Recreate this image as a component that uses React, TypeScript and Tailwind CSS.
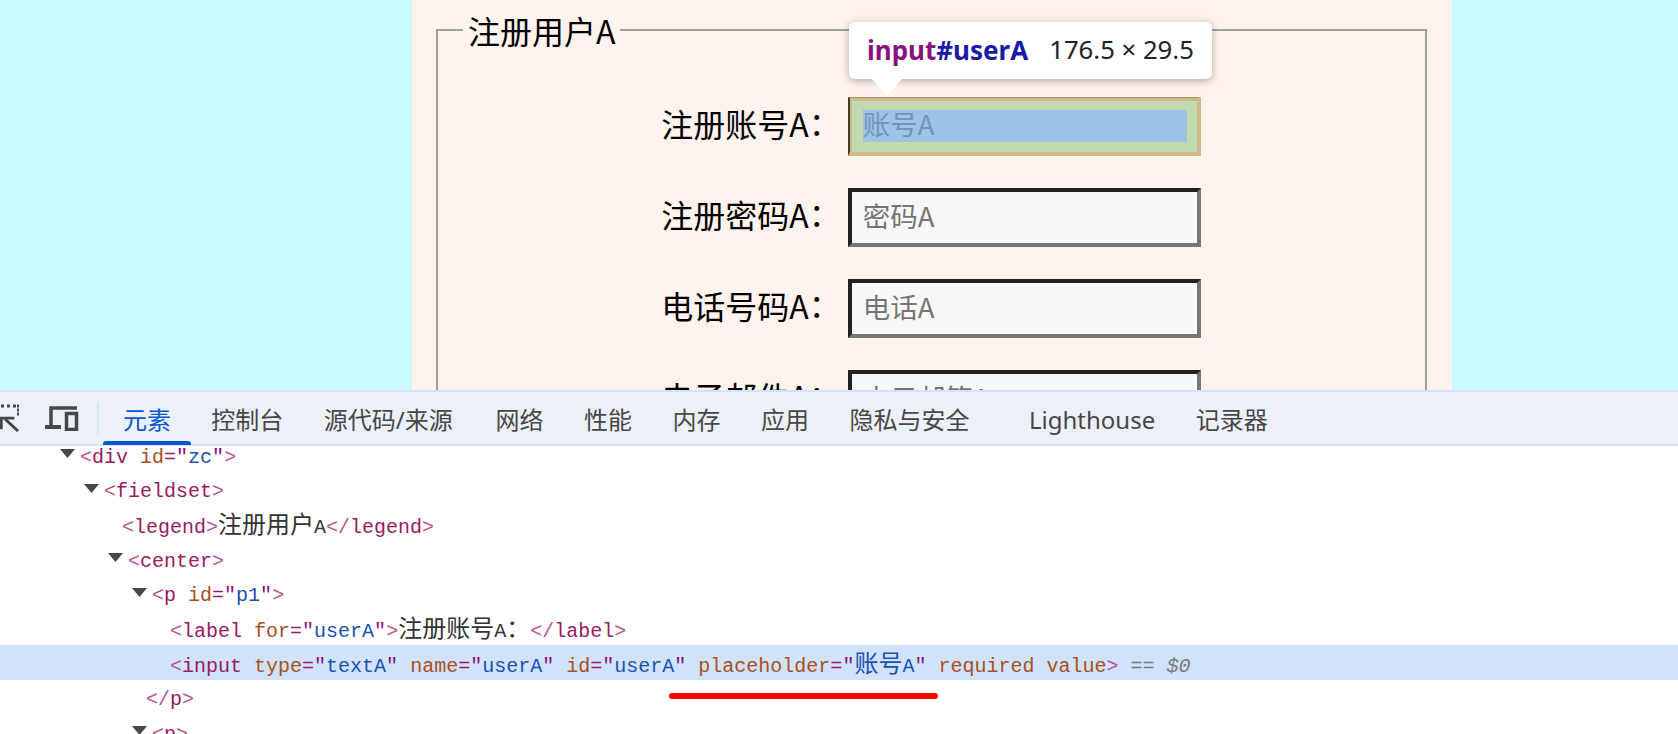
import type { ReactNode } from "react";

const cjk = '"Noto Sans CJK SC", sans-serif';

type FieldProps = {
  label: string;
  placeholder: string;
};

function FieldLabel({ label }: { label: string }) {
  return (
    <label className="text-[32px] leading-[44px] text-black mb-[8px] ml-[-2px] mr-[2px]">
      {label}
      <span className="font-['Noto_Sans_CJK_TC'] ml-[-8px] mr-[8px]">：</span>
    </label>
  );
}

function Field({ label, placeholder }: FieldProps) {
  return (
    <p className="flex items-center justify-center gap-[5px]">
      <FieldLabel label={label} />
      <input
        type="text"
        placeholder={placeholder}
        className="w-[353px] h-[59px] border-[4px] border-solid border-t-[#222222] border-l-[#222222] border-r-[#767676] border-b-[#767676] bg-[#f8f8f8] pl-[11px] pr-[10px] pb-[6px] text-[27.5px] leading-[32px] placeholder:text-[#757575]"
      />
    </p>
  );
}

function Arrow() {
  return (
    <svg width="15" height="9" viewBox="0 0 15 9" className="mr-[5px] mt-[-8px] shrink-0">
      <polygon points="0,0 15,0 7.5,9" fill="#474747" />
    </svg>
  );
}

const B = ({ children }: { children: ReactNode }) => (
  <span className="text-[#b9568c]">{children}</span>
);
const Tag = ({ children }: { children: ReactNode }) => (
  <span className="text-[#9c1a5f]">{children}</span>
);
const Attr = ({ children }: { children: ReactNode }) => (
  <span className="text-[#a94f1f]">{children}</span>
);
const Val = ({ children }: { children: ReactNode }) => (
  <span className="text-[#1a51b3]">
    <span className="text-[#881280]">"</span>
    {children}
    <span className="text-[#881280]">"</span>
  </span>
);
const Cn = ({ children }: { children: ReactNode }) => (
  <span className="text-[24px] leading-none font-['Noto_Sans_CJK_SC']">{children}</span>
);

const rowClass =
  "flex items-center h-[34.67px] pt-[6px] whitespace-pre font-['Liberation_Mono'] text-[20px]";

function DomTree() {
  return (
    <div className="relative flex-1 bg-white overflow-hidden">
      <div className="mt-[-8.6px]">
        <div className={`${rowClass} pl-[60px]`}>
          <Arrow />
          <span>
            <B>&lt;</B><Tag>div</Tag> <Attr>id</Attr><Tag>=</Tag><Val>zc</Val><B>&gt;</B>
          </span>
        </div>
        <div className={`${rowClass} pl-[84px]`}>
          <Arrow />
          <span>
            <B>&lt;</B><Tag>fieldset</Tag><B>&gt;</B>
          </span>
        </div>
        <div className={`${rowClass} pl-[122px]`}>
          <span>
            <B>&lt;</B><Tag>legend</Tag><B>&gt;</B>
            <span className="text-[#333333]"><Cn>注册用户</Cn>A</span>
            <B>&lt;/</B><Tag>legend</Tag><B>&gt;</B>
          </span>
        </div>
        <div className={`${rowClass} pl-[108px]`}>
          <Arrow />
          <span>
            <B>&lt;</B><Tag>center</Tag><B>&gt;</B>
          </span>
        </div>
        <div className={`${rowClass} pl-[132px]`}>
          <Arrow />
          <span>
            <B>&lt;</B><Tag>p</Tag> <Attr>id</Attr><Tag>=</Tag><Val>p1</Val><B>&gt;</B>
          </span>
        </div>
        <div className={`${rowClass} pl-[170px]`}>
          <span>
            <B>&lt;</B><Tag>label</Tag> <Attr>for</Attr><Tag>=</Tag><Val>userA</Val><B>&gt;</B>
            <span className="text-[#333333]"><Cn>注册账号</Cn>A<Cn>：</Cn></span>
            <B>&lt;/</B><Tag>label</Tag><B>&gt;</B>
          </span>
        </div>
        <div className={`${rowClass} pl-[170px] bg-[#d1e2fb]`}>
          <span>
            <B>&lt;</B><Tag>input</Tag> <Attr>type</Attr><Tag>=</Tag><Val>textA</Val>{" "}
            <Attr>name</Attr><Tag>=</Tag><Val>userA</Val>{" "}
            <Attr>id</Attr><Tag>=</Tag><Val>userA</Val>{" "}
            <Attr>placeholder</Attr><Tag>=</Tag><Val><Cn>账号</Cn>A</Val>{" "}
            <Attr>required</Attr> <Attr>value</Attr><B>&gt;</B>
            <span className="italic text-[#7a7a7a]"> == $0</span>
          </span>
        </div>
        <div className={`${rowClass} pl-[146px]`}>
          <span>
            <B>&lt;/</B><Tag>p</Tag><B>&gt;</B>
          </span>
        </div>
        <div className={`${rowClass} pl-[132px]`}>
          <Arrow />
          <span>
            <B>&lt;</B><Tag>p</Tag><B>&gt;</B>
          </span>
        </div>
      </div>
      {/* hand drawn red mark under the placeholder attr */}
      <div className="absolute left-[669px] top-[247px] w-[269px] h-[6px] rounded-full bg-[#ff0000]" />
    </div>
  );
}

const tabs = ["控制台", "网络", "性能", "内存", "应用", "隐私与安全"];

function Toolbar() {
  return (
    <div className="flex items-center h-[56px] shrink-0 bg-[#ecf0f9] border-y-2 border-[#d3e3fd] text-[24px] text-[#474747] font-['Noto_Sans','Noto_Sans_CJK_SC',sans-serif]">
      <svg width="20" height="28" viewBox="0 0 20 28" className="shrink-0">
        <path d="M1 2h3M7 2h3M13 2h3M17 2h2M17 6h2M17 10h2" stroke="#474747" strokeWidth="3" fill="none" />
        <path d="M0 13h16v3H3v11H0z" fill="#474747" transform="translate(0 1) scale(0.9)" />
        <path d="M5 15l13 12" stroke="#474747" strokeWidth="3" fill="none" />
      </svg>
      <svg width="34" height="26" viewBox="0 0 34 26" className="ml-[25px] shrink-0">
        <path d="M6 23V3h26" stroke="#474747" strokeWidth="3.5" fill="none" />
        <rect x="0" y="20" width="16" height="4" fill="#474747" />
        <rect x="21.5" y="8.5" width="10" height="16" stroke="#474747" strokeWidth="3.5" fill="none" />
      </svg>
      <div className="w-[2px] h-[32px] bg-[#d3e3fd] ml-[18px] mr-[4px]" />
      <div className="relative h-full flex items-center px-[20px] pt-[4px] text-[#0b57d0]">
        元素
        <div className="absolute left-0 right-0 bottom-[-1px] h-[4px] rounded-t-[3px] bg-[#0b57d0]" />
      </div>
      {tabs.map((tab, index) => (
        <div key={tab} className="flex items-center h-full pt-[4px]">
          {index === 1 && <div className="px-[20.25px] pr-[22.5px]">源代码/来源</div>}
          <div className="px-[20.25px]">{tab}</div>
        </div>
      ))}
      <div className="flex items-center h-full px-[20.25px] pt-[4px] ml-[19px]">Lighthouse</div>
      <div className="flex items-center h-full px-[20.25px] pt-[4px]">记录器</div>
    </div>
  );
}

export default function App() {
  return (
    <div className="relative w-[1678px] h-[734px] flex flex-col overflow-hidden bg-white" style={{ fontFamily: cjk }}>
      <div className="h-[390px] shrink-0 bg-[#ccfbff] overflow-hidden">
        <div className="ml-[412px] w-[1040px] h-full bg-[#fff3ee] pt-[8px] pl-[24px] pr-[25px]">
          <fieldset className="border-2 border-solid border-[#a0a0a0] pl-[25px] h-[500px]">
            <legend className="px-[5px] text-[32px] leading-[44px] text-black">注册用户A</legend>
            <div className="flex flex-col gap-[32px] pt-[45px] ml-[-25px] pl-[1px]">
              <p className="flex items-center justify-center gap-[5px]">
                <FieldLabel label="注册账号A" />
                <span className="w-[353px] h-[59px] border-solid border-t-[1px] border-r-[4px] border-b-[4px] border-l-[2px] border-t-[#a3956c] border-r-[#cfba89] border-b-[#cfba89] border-l-[#3f3a2a] shadow-[inset_2px_3px_0_#cfba89] bg-[#c3d9b0] pl-[13px] pr-[10px] pt-[12px] pb-[10px]">
                  <input
                    type="text"
                    placeholder="账号A"
                    className="block w-full h-full bg-[#9dc3e6] pb-[6px] text-[27.5px] leading-[26px] placeholder:text-[#7595b8]"
                  />
                </span>
              </p>
              <Field label="注册密码A" placeholder="密码A" />
              <Field label="电话号码A" placeholder="电话A" />
              <Field label="电子邮件A" placeholder="电子邮箱A" />
            </div>
          </fieldset>
        </div>
      </div>
      <Toolbar />
      <DomTree />

      {/* inspect tooltip */}
      <div className="absolute left-[849px] top-[22px] w-[363px] h-[57px] rounded-[6px] bg-white shadow-[0_2px_8px_rgba(0,0,0,0.3)] flex items-center pl-[18px] text-[26px] font-['Noto_Sans','Noto_Sans_CJK_SC',sans-serif]">
        <span className="font-bold text-[#881280]">input</span>
        <span className="font-bold text-[#1a1aa6]">#userA</span>
        <span className="ml-[21px] text-[25.7px] text-[#222222]">176.5 × 29.5</span>
      </div>
      <svg width="30" height="17" viewBox="0 0 30 17" className="absolute left-[872px] top-[79px]">
        <polygon points="0,0 30,0 15,17" fill="#ffffff" />
      </svg>
    </div>
  );
}
